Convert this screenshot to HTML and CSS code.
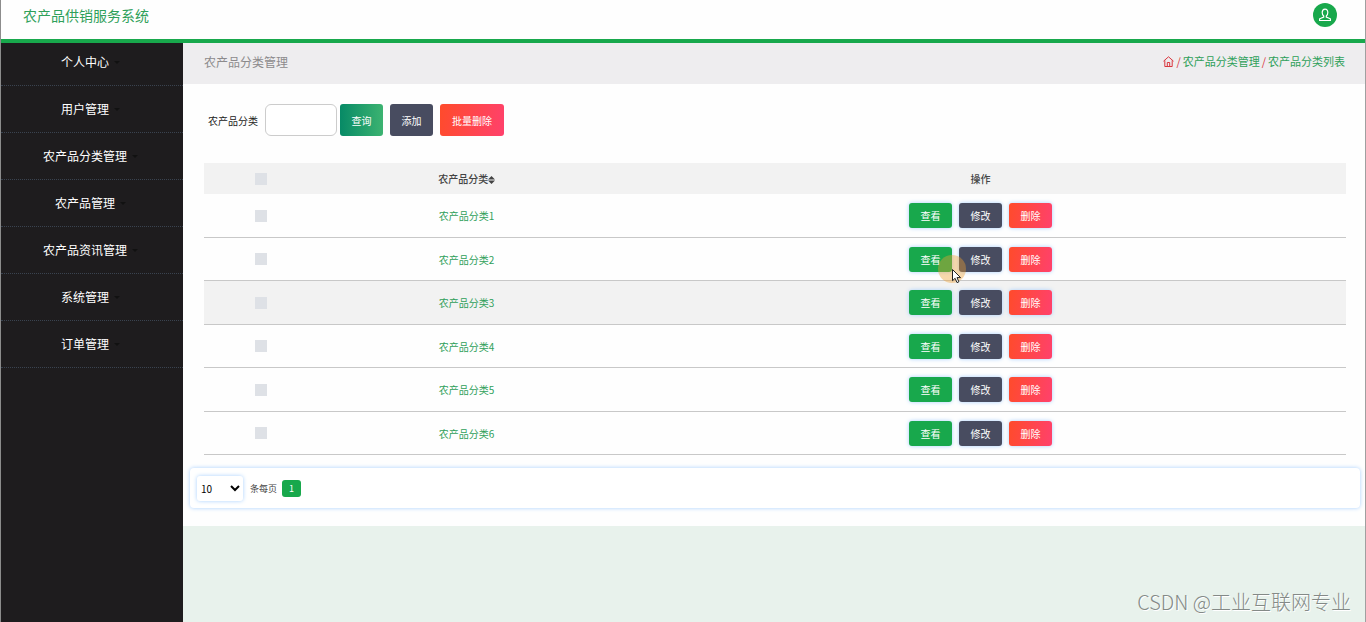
FILE: index.html
```html
<!DOCTYPE html>
<html lang="zh-CN">

<head>
  <meta charset="UTF-8">
  <meta name="viewport" content="width=device-width, initial-scale=1.0">
  <title>农产品供销服务系统</title>
  <link rel="stylesheet" href="styles.css">
</head>

<body>
  <header class="navbar">
    <h1 class="brand">农产品供销服务系统</h1>
    <button type="button" class="avatar" aria-label="个人中心">
      <svg width="14" height="14" viewBox="0 0 14 14" fill="none" stroke="#fff" stroke-width="1.2">
        <path d="M7 1.2C5 1.2 4.2 2.5 4.2 4.4c0 1.7.6 2.9 1.5 3.6v1L1.6 10.8v1.7h10.8v-1.7L8.3 9V8c.9-.7 1.5-1.9 1.5-3.6C9.8 2.5 9 1.2 7 1.2z" />
      </svg>
    </button>
  </header>

  <div class="wrapper">
    <nav class="sidebar">
      <ul>
        <li><a href="#">个人中心</a></li>
        <li><a href="#">用户管理</a></li>
        <li><a href="#">农产品分类管理</a></li>
        <li><a href="#">农产品管理</a></li>
        <li><a href="#">农产品资讯管理</a></li>
        <li><a href="#">系统管理</a></li>
        <li><a href="#">订单管理</a></li>
      </ul>
    </nav>

    <main class="main">
      <div class="page-head">
        <h2>农产品分类管理</h2>
        <div class="breadcrumb">
          <a href="#" class="home" aria-label="首页">
            <svg width="11" height="11" viewBox="0 0 11 11" fill="none" stroke="#d9363e" stroke-width="1">
              <path d="M.5 5.2L5.5.8l5 4.4M1.8 4.3v6.2h7.4V4.3M4.3 10.5v-4h2.4v4" />
            </svg>
          </a>
          <span>/</span>
          <a href="#">农产品分类管理</a>
          <span>/</span>
          <a href="#">农产品分类列表</a>
        </div>
      </div>

      <div class="content">
        <form class="search" action="javascript:void(0);">
          <label for="typeName">农产品分类</label>
          <input type="text" id="typeName" name="typeName">
          <button type="submit" class="btn btn-search">查询</button>
          <button type="button" class="btn btn-dark">添加</button>
          <button type="button" class="btn btn-red btn-batch">批量删除</button>
        </form>

        <table class="list">
          <thead>
            <tr>
              <th class="col-check"><input type="checkbox" aria-label="全选"></th>
              <th class="col-name">农产品分类<svg class="sort" width="7" height="8" viewBox="0 0 7 8" fill="#444"><path d="M3.5 0L7 3.5H0zM0 4.5h7L3.5 8z" /></svg></th>
              <th>操作</th>
            </tr>
          </thead>
          <tbody>
            <tr>
              <td><input type="checkbox" aria-label="农产品分类1"></td>
              <td class="name">农产品分类1</td>
              <td><div class="actions"><button type="button" class="btn btn-green">查看</button><button type="button" class="btn btn-dark">修改</button><button type="button" class="btn btn-red">删除</button></div></td>
            </tr>
            <tr>
              <td><input type="checkbox" aria-label="农产品分类2"></td>
              <td class="name">农产品分类2</td>
              <td>
                <div class="actions"><button type="button" class="btn btn-green">查看</button><button type="button" class="btn btn-dark">修改</button><button type="button" class="btn btn-red">删除</button>
                  <svg class="pointer" width="28" height="30" viewBox="0 0 28 30">
                    <circle cx="14" cy="14" r="14" fill="#f0a030" fill-opacity=".4" />
                    <path d="M14.5 14.5v11.2l2.6-2.4 1.9 4.3 1.9-.8-1.9-4.2h3.6z" fill="#fff" stroke="#222" stroke-width="1" />
                  </svg>
                </div>
              </td>
            </tr>
            <tr class="active">
              <td><input type="checkbox" aria-label="农产品分类3"></td>
              <td class="name">农产品分类3</td>
              <td><div class="actions"><button type="button" class="btn btn-green">查看</button><button type="button" class="btn btn-dark">修改</button><button type="button" class="btn btn-red">删除</button></div></td>
            </tr>
            <tr>
              <td><input type="checkbox" aria-label="农产品分类4"></td>
              <td class="name">农产品分类4</td>
              <td><div class="actions"><button type="button" class="btn btn-green">查看</button><button type="button" class="btn btn-dark">修改</button><button type="button" class="btn btn-red">删除</button></div></td>
            </tr>
            <tr>
              <td><input type="checkbox" aria-label="农产品分类5"></td>
              <td class="name">农产品分类5</td>
              <td><div class="actions"><button type="button" class="btn btn-green">查看</button><button type="button" class="btn btn-dark">修改</button><button type="button" class="btn btn-red">删除</button></div></td>
            </tr>
            <tr>
              <td><input type="checkbox" aria-label="农产品分类6"></td>
              <td class="name">农产品分类6</td>
              <td><div class="actions"><button type="button" class="btn btn-green">查看</button><button type="button" class="btn btn-dark">修改</button><button type="button" class="btn btn-red">删除</button></div></td>
            </tr>
          </tbody>
        </table>

        <div class="pager">
          <select id="pageSize">
            <option>10</option>
            <option>25</option>
            <option>50</option>
          </select>
          <label for="pageSize">条每页</label>
          <button type="button" class="page">1</button>
        </div>
      </div>
    </main>
  </div>

  <div class="watermark">CSDN @工业互联网专业</div>
</body>

</html>
```

FILE: styles.css
```css
* {
  box-sizing: border-box;
}

body {
  display: flex;
  flex-direction: column;
  min-height: 100vh;
  margin: 0;
  border-left: 1px solid #8c8c8c;
  border-right: 1px solid #a0a0a0;
  background: #e8f2ec;
  color: #222;
  font-family: "Noto Sans CJK SC", "Noto Sans", sans-serif;
  font-size: 10px;
}

h1,
h2,
ul {
  margin: 0;
  padding: 0;
  font-weight: normal;
}

a {
  color: #2fa05a;
  text-decoration: none;
}

button,
input,
select {
  font-family: inherit;
  font-size: 10px;
}

/* 顶部 */
.navbar {
  display: flex;
  justify-content: space-between;
  align-items: center;
  padding: 3px 28px 12px 22px;
  height: 43px;
  border-bottom: 4px solid #18a84c;
  background: #fefefe;
}

.brand {
  color: #2fa05a;
  font-size: 14px;
  line-height: 24px;
}

.avatar {
  display: flex;
  justify-content: center;
  align-items: center;
  width: 24px;
  height: 24px;
  padding: 0;
  border: none;
  border-radius: 50%;
  background: #18a84c;
}

.wrapper {
  display: flex;
  flex: 1;
}

/* 左侧菜单 */
.sidebar {
  width: 182px;
  background: #1e1c1e;
}

.sidebar ul {
  list-style: none;
}

.sidebar li {
  padding: 13px 3px 13px 0;
  border-bottom: 1px dotted #3a4350;
}

.sidebar li:first-child {
  padding-top: 9px;
}

.sidebar a {
  display: flex;
  justify-content: center;
  align-items: center;
  gap: 5px;
  color: #fff;
  font-size: 12px;
  line-height: 20px;
}

.sidebar a::after {
  content: "";
  border: 3px solid transparent;
  border-top-color: #111;
  border-bottom: none;
}

.main {
  flex: 1;
}

.page-head {
  display: flex;
  justify-content: space-between;
  align-items: center;
  height: 41px;
  padding: 0 20px 5px 21px;
  background: #eeedef;
}

.page-head h2 {
  color: #8c8a8c;
  font-size: 12px;
}

.breadcrumb {
  display: flex;
  align-items: center;
  gap: 2px;
  font-size: 11px;
}

.breadcrumb .home {
  display: flex;
}

.breadcrumb span {
  color: #d9363e;
}

.content {
  padding: 20px 5px 18px 7px;
  background: #fefefe;
}

/* 搜索 */
.search {
  display: flex;
  align-items: center;
  gap: 7px;
  margin-bottom: 27px;
  padding-left: 18px;
}

.search input {
  width: 72px;
  height: 32px;
  margin-right: -4px;
  border: 1px solid #ccc;
  border-radius: 6px;
  background: #fff;
}

.search .btn {
  height: 32px;
}

.btn {
  width: 43px;
  height: 25px;
  padding: 0;
  border: none;
  border-radius: 3px;
  color: #fff;
  cursor: pointer;
}

.btn-batch {
  width: 64px;
}

.btn-search {
  background: linear-gradient(90deg, #078a66, #3cb371);
}

.btn-green {
  background: #18a84c;
}

.btn-dark {
  background: #484c60;
}

.btn-red {
  background: linear-gradient(100deg, #ff4b2b, #ff416c);
}

/* 列表 */
.list {
  width: calc(100% - 28px);
  margin: 0 14px 13px;
  border-spacing: 0;
  table-layout: fixed;
  text-align: center;
}

.list th,
.list td {
  padding: 0;
}

.list th {
  height: 31px;
  background: #f2f2f2;
  color: #444;
  font-weight: 500;
}

.list td {
  height: 44px;
  border-bottom: 1px solid #c8c8c8;
}

.list tr:nth-child(even) td {
  height: 43px;
}

.list .active td {
  background: #f2f2f2;
}

.col-check {
  width: 10%;
}

.col-name {
  width: 26%;
}

.list .name {
  color: #2fa05a;
}

.list input {
  appearance: none;
  display: block;
  width: 12px;
  height: 12px;
  margin: 0 auto;
  background: #dee1e6;
}

.sort {
  vertical-align: middle;
}

.actions {
  display: flex;
  justify-content: center;
  gap: 7px;
  position: relative;
  width: 143px;
  margin: 0 auto;
}

.actions .btn {
  box-shadow: 0 0 4px #a8d0ff;
}

.pointer {
  position: absolute;
  left: 29px;
  top: 8px;
}

/* 分页 */
.pager {
  display: flex;
  align-items: center;
  gap: 5px;
  height: 40px;
  padding: 0 7px;
  border-radius: 4px;
  background: #fff;
  box-shadow: 0 0 4px #a8d0ff;
}

.pager select {
  width: 46px;
  height: 25px;
  padding: 0;
  border: none;
  border-radius: 3px;
  background: #fff;
  box-shadow: 0 0 4px #a8d0ff;
}

.pager label {
  padding-left: 2px;
  color: #444;
  font-size: 9px;
}

.page {
  width: 19px;
  height: 17px;
  padding: 0;
  border: none;
  border-radius: 3px;
  background: #18a84c;
  color: #fff;
  font-size: 9px;
}

.watermark {
  position: absolute;
  right: 15px;
  bottom: 5px;
  color: #848a87;
  font-size: 20px;
  font-weight: 300;
  line-height: 30px;
  text-shadow: 1px 1px 0 #fff;
}
```
